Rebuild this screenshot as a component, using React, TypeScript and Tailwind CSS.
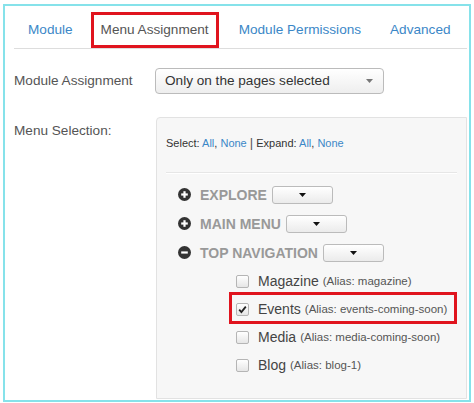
import React from "react";

type TreeParent = { label: string; open: boolean };
type TreeChild = { label: string; alias: string; checked: boolean };

const parents: TreeParent[] = [
  { label: "EXPLORE", open: false },
  { label: "MAIN MENU", open: false },
  { label: "TOP NAVIGATION", open: true },
];

const children: TreeChild[] = [
  { label: "Magazine", alias: "magazine", checked: false },
  { label: "Events", alias: "events-coming-soon", checked: true },
  { label: "Media", alias: "media-coming-soon", checked: false },
  { label: "Blog", alias: "blog-1", checked: false },
];

function CircleIcon({ open }: { open: boolean }) {
  return (
    <svg width="13" height="13" viewBox="0 0 13 13" className="shrink-0">
      <circle cx="6.5" cy="6.5" r="6.5" fill="#333" />
      <path d="M3.2 6.5h6.6" stroke="#fff" strokeWidth="2.2" />
      {!open && <path d="M6.5 3.2v6.6" stroke="#fff" strokeWidth="2.2" />}
    </svg>
  );
}

function Caret({ color }: { color: string }) {
  return (
    <svg width="7" height="4" viewBox="0 0 7 4">
      <path d="M0 0h7L3.5 4z" fill={color} />
    </svg>
  );
}

function Checkbox({ checked }: { checked: boolean }) {
  return (
    <span className="flex h-[13px] w-[13px] shrink-0 items-center justify-center rounded-[2px] border border-[#b5b5b5] bg-gradient-to-b from-white to-[#e6e6e6]">
      {checked && (
        <svg width="9" height="9" viewBox="0 0 9 9">
          <path d="M1.2 4.6l2.2 2.4L7.8 1.6" stroke="#222" strokeWidth="1.8" fill="none" />
        </svg>
      )}
    </span>
  );
}

export default function App() {
  return (
    <div className="h-[403px] w-[474px] bg-white pl-[3px] pt-[4px] font-['Liberation_Sans',Arial,sans-serif]">
      <div className="h-[398px] w-[468px] overflow-hidden border-2 border-[#86e2ea]">
        <ul className="ml-[9px] mr-[2px] mt-[6px] flex items-end border-b border-[#dddddd] text-[13.6px] leading-[20px]">
          <li className="py-[8px] pl-[14px] pr-[18px] text-[#3b87c7]">Module</li>
          <li className="border-[3px] border-[#e0141e] px-[7px] py-[5px] text-[#555]">Menu Assignment</li>
          <li className="py-[8px] pl-[20px] pr-[14px] text-[#3b87c7]">Module Permissions</li>
          <li className="py-[8px] pl-[15px] text-[#3b87c7]">Advanced</li>
        </ul>

        <div className="ml-[9px] mt-[19px] flex items-center text-[13.6px] leading-[20px]">
          <label className="w-[141px] text-[#555]">Module Assignment</label>
          <div className="flex h-[26px] w-[229px] items-center justify-between rounded-[4px] border border-[#bbbbbb] bg-gradient-to-b from-white to-[#eeeeee] pl-[9px] pr-[10px] text-[#333]">
            <span>Only on the pages selected</span>
            <Caret color="#777" />
          </div>
        </div>

        <div className="ml-[9px] mt-[23px] flex items-start text-[13.6px] leading-[20px]">
          <label className="w-[142px] pt-[4px] text-[#555]">Menu Selection:</label>
          <div className="h-[282px] w-[311px] rounded-tl-[4px] border border-[#e2e2e2] bg-[#f7f7f7]">
            <div className="pl-[9px] pt-[18px] text-[11px] leading-[14px] text-[#333]">
              Select: <span className="text-[#3b87c7]">All</span>,{" "}
              <span className="text-[#3b87c7]">None</span>{" "}
              <span className="text-[13px] text-[#555]">|</span> Expand:{" "}
              <span className="text-[#3b87c7]">All</span>,{" "}
              <span className="text-[#3b87c7]">None</span>
            </div>
            <div className="mx-[9px] mt-[22px] border-t border-b border-t-[#e6e6e6] border-b-white" />

            <div className="mt-[6px]">
              {parents.map((p) => (
                <div key={p.label} className="flex h-[29px] items-center pl-[21px]">
                  <CircleIcon open={p.open} />
                  <span className="ml-[9px] text-[14px] font-bold text-[#999]">{p.label}</span>
                  <span className="ml-[5px] flex h-[18px] w-[61px] items-center justify-center rounded-[3px] border border-[#bbbbbb] bg-gradient-to-b from-white to-[#ebebeb]">
                    <Caret color="#111" />
                  </span>
                </div>
              ))}
              {children.map((c) => (
                <div key={c.label} className="relative flex h-[28px] items-center pl-[79px]">
                  {c.checked && (
                    <span className="absolute -top-[3px] -bottom-[1px] left-[72px] right-[9px] border-[3px] border-[#e0141e]" />
                  )}
                  <Checkbox checked={c.checked} />
                  <span className="ml-[9px] text-[14px] text-[#444]">{c.label}</span>
                  <span className="ml-[4px] text-[11.5px] text-[#555]">(Alias: {c.alias})</span>
                </div>
              ))}
            </div>
          </div>
        </div>
      </div>
    </div>
  );
}
